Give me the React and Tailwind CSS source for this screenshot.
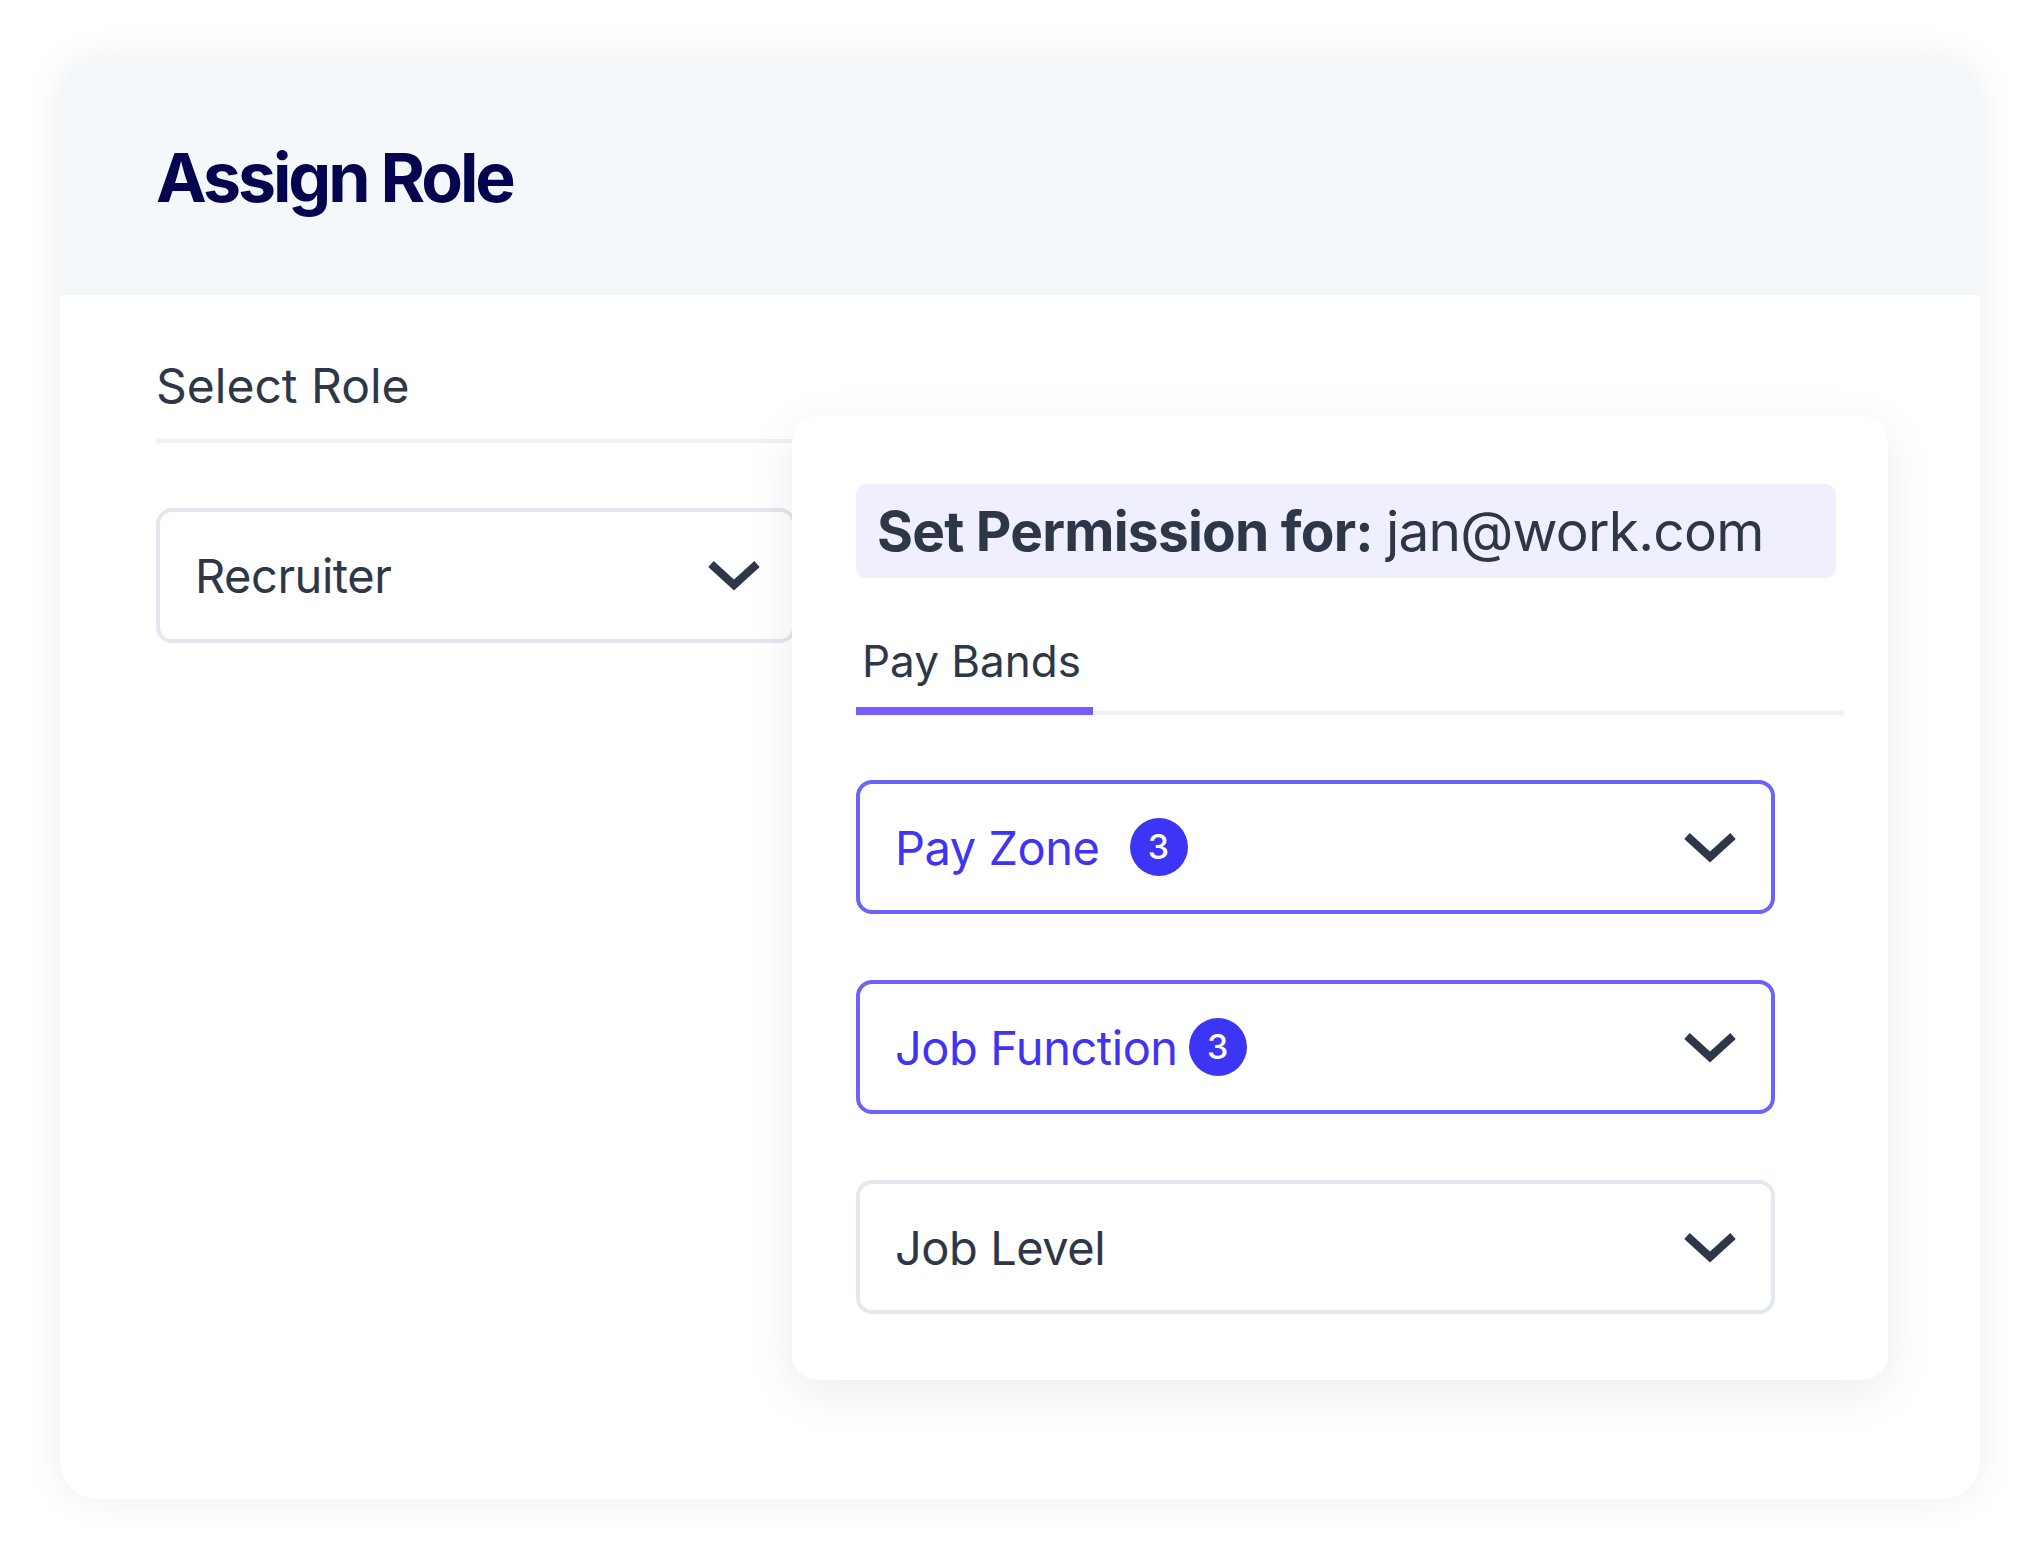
import React from "react";

// Chevron used in every select
const Chevron = ({ className = "" }) => (
  <svg
    viewBox="0 0 52 31"
    className={className}
    fill="none"
    stroke="currentColor"
    strokeWidth="8"
    strokeLinejoin="miter"
  >
    <path d="M3 4 L26 25 L49 4" />
  </svg>
);

const Badge = ({ count, className = "" }) => (
  <span
    className={`w-[58px] h-[58px] rounded-full bg-[#3d35f6] text-white text-[34px] leading-none font-medium flex items-center justify-center ${className}`}
  >
    {count}
  </span>
);

const SelectBox = ({ label, active, badge, badgeGap }) => (
  <div
    className={`w-[919px] h-[134px] rounded-[16px] border-[4px] flex items-center pl-[35px] pr-[35px] bg-white ${
      active ? "border-[#6b63fb]" : "border-[#e3e8f0]"
    }`}
  >
    <span
      className={`text-[47px] leading-none tracking-[-0.01em] ${
        active ? "text-[#3f33f4]" : "text-[#2d3748]"
      }`}
    >
      {label}
    </span>
    {badge && <Badge count={badge} className={badgeGap} />}
    <Chevron className="ml-auto w-[52px] h-[31px] text-[#2d3748]" />
  </div>
);

const App = () => {
  return (
    <div className="w-[2040px] h-[1560px] bg-white pt-[59px] pl-[60px] font-['Inter','Noto_Sans',sans-serif]">
      <div className="relative w-[1920px] h-[1440px] rounded-[38px] bg-white shadow-[0_0_40px_rgba(0,0,0,0.07)] overflow-hidden flex flex-col">
        {/* --- HEADER --- */}
        <div className="h-[236px] bg-[#f5f8fb] flex items-center px-[96px]">
          <h1 className="text-[68px] leading-none font-bold tracking-[-0.045em] text-[#05044f]">
            Assign Role
          </h1>
        </div>

        {/* --- BODY --- */}
        <div className="flex-1 px-[96px]">
          <div className="w-[680px]">
            <div className="mt-[67px] text-[48px] leading-none text-[#2d3748]">
              Select Role
            </div>
            <div className="mt-[29px] h-[4px] bg-[#eef1f5]" />
            <div className="mt-[65px] w-[640px] h-[135px] rounded-[16px] border-[4px] border-[#e3e8f0] flex items-center pl-[35px] pr-[32px]">
              <span className="text-[47px] leading-none tracking-[-0.01em] text-[#2d3748]">
                Recruiter
              </span>
              <Chevron className="ml-auto w-[52px] h-[31px] text-[#2d3748]" />
            </div>
          </div>
        </div>

        {/* --- PERMISSION POPOVER --- */}
        <div className="absolute left-[732px] top-[357px] w-[1096px] h-[964px] rounded-[26px] bg-white shadow-[0_12px_50px_rgba(0,0,0,0.08)] pt-[68px] pl-[64px]">
          <div className="w-[980px] h-[94px] rounded-[10px] bg-[#efeffd] flex items-center pl-[21px] text-[55px] leading-none tracking-[-0.014em] text-[#2d3748] whitespace-nowrap">
            <span className="font-bold">Set Permission for:</span>
            <span className="ml-[13px]">jan@work.com</span>
          </div>

          {/* Tabs */}
          <div className="w-[988px] mt-[61px]">
            <div className="pl-[6px] text-[44px] leading-none text-[#2d3748]">
              Pay Bands
            </div>
            <div className="mt-[24px] flex items-end">
              <div className="w-[237px] h-[8px] bg-[#7a5cfa]" />
              <div className="flex-1 h-[4px] bg-[#eef1f5]" />
            </div>
          </div>

          <div className="mt-[65px] flex flex-col gap-[66px]">
            <SelectBox label="Pay Zone" active badge="3" badgeGap="ml-[30px]" />
            <SelectBox
              label="Job Function"
              active
              badge="3"
              badgeGap="ml-[11px]"
            />
            <SelectBox label="Job Level" />
          </div>
        </div>
      </div>
    </div>
  );
};

export default App;
